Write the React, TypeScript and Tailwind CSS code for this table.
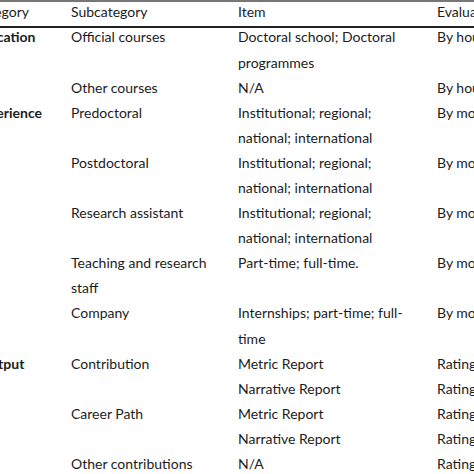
const rows: { cat?: string; sub?: string[]; item: string[]; evalText: string }[] = [
  { cat: "Education", sub: ["Official courses"], item: ["Doctoral school; Doctoral", "programmes"], evalText: "By hours" },
  { sub: ["Other courses"], item: ["N/A"], evalText: "By hours" },
  { cat: "Experience", sub: ["Predoctoral"], item: ["Institutional; regional;", "national; international"], evalText: "By months" },
  { sub: ["Postdoctoral"], item: ["Institutional; regional;", "national; international"], evalText: "By months" },
  { sub: ["Research assistant"], item: ["Institutional; regional;", "national; international"], evalText: "By months" },
  { sub: ["Teaching and research", "staff"], item: ["Part-time; full-time."], evalText: "By months" },
  { sub: ["Company"], item: ["Internships; part-time; full-", "time"], evalText: "By months" },
  { cat: "Output", sub: ["Contribution"], item: ["Metric Report"], evalText: "Rating" },
  { item: ["Narrative Report"], evalText: "Rating" },
  { sub: ["Career Path"], item: ["Metric Report"], evalText: "Rating" },
  { item: ["Narrative Report"], evalText: "Rating" },
  { sub: ["Other contributions"], item: ["N/A"], evalText: "Rating" },
];

export default function App() {
  return (
    <div className="w-[474px] h-[474px] overflow-hidden bg-white text-[#1c1c1c] font-['Lato',sans-serif] text-[14px]">
      <div className="h-[2px] bg-[#777]" />
      <div className="ml-[-27px] w-[620px]">
        {/* Header */}
        <div className="grid grid-cols-[98px_167px_199px_1fr] leading-[18px] pt-[1px] pb-[5px] border-b-2 border-[#222]">
          <div>Category</div>
          <div>Subcategory</div>
          <div>Item</div>
          <div>Evaluation</div>
        </div>

        {/* Body */}
        <div className="mt-[-3.6px] leading-[25.1px]">
          {rows.map((r, i) => (
            <div key={i} className="grid grid-cols-[98px_167px_199px_1fr]">
              <div className={r.cat === "Output" ? "font-bold pl-[6px]" : "font-bold"}>{r.cat}</div>
              <div>
                {r.sub?.map((l, j) => (
                  <div key={j}>{l}</div>
                ))}
              </div>
              <div>
                {r.item.map((l, j) => (
                  <div key={j}>{l}</div>
                ))}
              </div>
              <div>{r.evalText}</div>
            </div>
          ))}
        </div>
      </div>
    </div>
  );
}
